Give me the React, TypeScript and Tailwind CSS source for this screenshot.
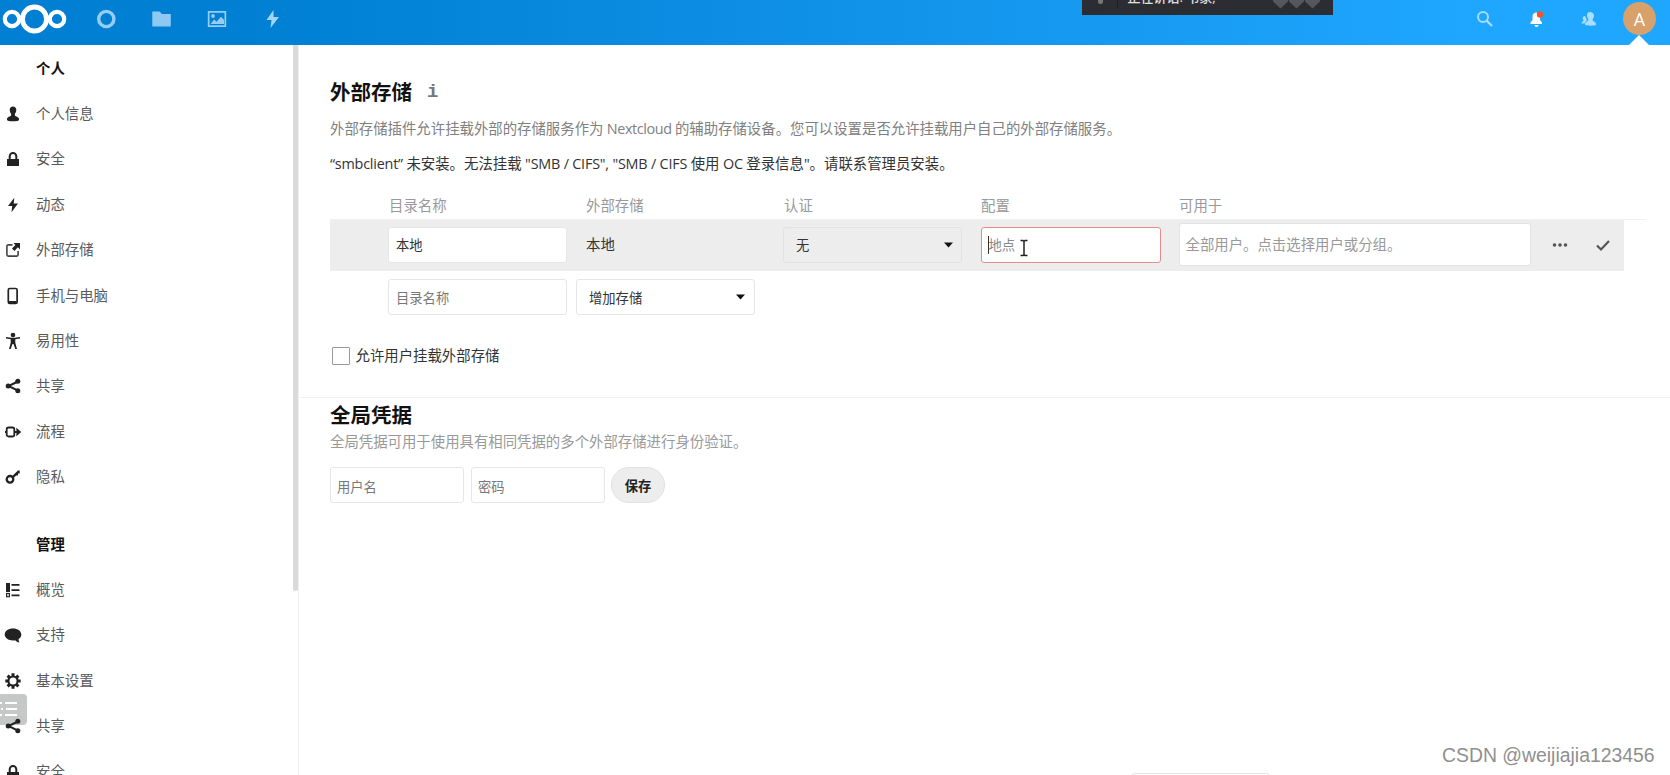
import React from "react";

type IconName =
  | "user" | "lock" | "bolt" | "external" | "phone" | "access" | "share"
  | "flow" | "key" | "list" | "comment" | "gear";

function Icon({ name }: { name: IconName }) {
  const common = { width: 16, height: 16, viewBox: "0 0 16 16", fill: "#222", className: "block shrink-0" };
  switch (name) {
    case "user":
      return <svg {...common}><path d="M8 .5C6 .5 4.700 1.800 4.700 3.800c0 1.700.6 3 1.400 4v1.600C5.600 10.400 2 10.700 2 13v.7c0 1 2.500 1.500 6 1.500s6-.5 6-1.500V13c0-2.300-3.600-2.600-4.100-3.600V7.800c.8-1 1.400-2.300 1.400-4C11.300 1.800 10 .5 8 .5z" /></svg>;
    case "lock":
      return <svg {...common}><path d="M8 1a4.300 4.300 0 0 0-4.300 4.300V8H2v7h12V8h-1.700V5.300A4.300 4.300 0 0 0 8 1zm0 2a2.300 2.300 0 0 1 2.300 2.300V8H5.700V5.300A2.300 2.300 0 0 1 8 3z" /></svg>;
    case "bolt":
      return <svg {...common}><path d="M9.300.8 3 9h4.200L6.500 15.200 13 6.600H8.700z" /></svg>;
    case "external":
      return <svg {...common}><path d="M7.500 2.900H3.200a1.300 1.300 0 0 0-1.300 1.300v8.600a1.300 1.300 0 0 0 1.300 1.300h8.600a1.300 1.300 0 0 0 1.300-1.300V9" fill="none" stroke="#444" strokeWidth="1.600" /><path d="M8.500 1H15v6.500l-2.200-2.200L9.500 9 7 6.500l3.400-3.500z" /></svg>;
    case "phone":
      return <svg {...common} height={18} viewBox="0 0 16 18"><rect x="3.300" y="1.500" width="8.800" height="15" rx="1.500" fill="none" stroke="#222" strokeWidth="1.700" /><path d="M4 14h7.500v2H4z" /></svg>;
    case "access":
      return <svg {...common} height={18} viewBox="0 0 16 18"><circle cx="8" cy="3" r="2.300" /><path d="M1 4.900 6.500 5.700h3L15 4.900v1.500L10.300 7.300v3.400L12 17h-1.700L8.500 12h-1L5.700 17H4l1.700-6.300V7.300L1 6.400z" /></svg>;
    case "share":
      return <svg {...common}><path d="M13 3.500 3.500 8 13 12.700" fill="none" stroke="#222" strokeWidth="2" /><circle cx="12.800" cy="3.300" r="2.500" /><circle cx="3.200" cy="8" r="2.500" /><circle cx="12.800" cy="12.700" r="2.500" /></svg>;
    case "flow":
      return <svg {...common}><rect x="1.700" y="3.500" width="7.600" height="9" rx="1.800" fill="none" stroke="#222" strokeWidth="1.800" /><path d="M0 7h1.500v2H0zM9.500 7h4v2h-4z" /><path d="M11.300 3.700 16.200 8l-4.900 4.300V9.600L13 8l-1.700-1.600z" /></svg>;
    case "key":
      return <svg {...common}><circle cx="5" cy="10.300" r="3.300" fill="none" stroke="#222" strokeWidth="2.300" /><path d="m7 7.200 6-5.700h1.700v3h-1.700v1.900h-1.900L8.700 9z" /></svg>;
    case "list":
      return <svg {...common}><path d="M1 1h4v9H1zM6.500 2h8v1.800h-8zM6.500 7.200h8V9h-8zM6.500 12.500h8v1.800h-8z" /><rect x="1.600" y="11.500" width="2.800" height="3.200" fill="none" stroke="#222" strokeWidth="1.200" /></svg>;
    case "comment":
      return <svg {...common} width={18} viewBox="0 0 18 16"><path d="M9 1.500c4.800 0 8.300 2.600 8.300 6 0 2-1 3.500-2.800 4.600.1 1.500.5 2.600.9 3.400-1.800-.4-3.200-1.200-4.300-2.300-.7.100-1.400.2-2.100.2C4.200 13.400.7 10.900.7 7.500s3.500-6 8.300-6z" /></svg>;
    case "gear":
      return <svg {...common}><g stroke="#222" strokeWidth="3" strokeLinecap="butt"><path d="M8 0.300v15.400M.3 8h15.400M2.600 2.600l10.800 10.800M13.400 2.600 2.600 13.400" /></g><circle cx="8" cy="8" r="5.600" /><circle cx="8" cy="8" r="3.500" fill="#fff" /></svg>;
  }
}

function NavItem({ icon, label }: { icon: IconName; label: string }) {
  return (
    <li className="flex h-[45.400px] items-center">
      <span className="relative z-20 flex w-[26px] shrink-0 justify-center">
        <Icon name={icon} />
      </span>
      <span className="ml-[10px] text-[#5a5a5a]">{label}</span>
    </li>
  );
}

const personal: [IconName, string][] = [
  ["user", "个人信息"], ["lock", "安全"], ["bolt", "动态"], ["external", "外部存储"],
  ["phone", "手机与电脑"], ["access", "易用性"], ["share", "共享"], ["flow", "流程"], ["key", "隐私"],
];
const admin: [IconName, string][] = [
  ["list", "概览"], ["comment", "支持"], ["gear", "基本设置"], ["share", "共享"], ["lock", "安全"],
];

function Caret() {
  return <svg width="9" height="6" viewBox="0 0 9 6" className="block"><path d="M0 .5h9L4.500 5.500z" fill="#111" /></svg>;
}

const field = "flex h-[36px] items-center rounded-[3px] border border-[#e6e6e6] bg-white text-[13.300px]";

export default function App() {
  return (
    <div className="relative flex h-[775px] w-[1670px] flex-col overflow-hidden bg-white font-['Open_Sans','Noto_Sans_CJK_SC',sans-serif] text-[14.400px] leading-[22px] text-[#333]">
      <header className="flex h-[45px] shrink-0 items-start justify-between bg-linear-to-r from-[#007fd3] from-15% to-[#1fa7ff] to-90%">
        <div className="flex h-[38px] items-center">
          <svg width="66" height="32" viewBox="0 0 66 32" fill="none" stroke="#fff" className="ml-[1px] block">
            <circle cx="33.500" cy="16" r="12" strokeWidth="4.800" />
            <circle cx="11" cy="16" r="7.200" strokeWidth="4.200" />
            <circle cx="56" cy="16" r="7.200" strokeWidth="4.200" />
          </svg>
          <svg width="20" height="20" viewBox="0 0 20 20" className="ml-[29px] block"><circle cx="10.300" cy="10" r="7.600" fill="none" stroke="#96cdf2" strokeWidth="3.400" /></svg>
          <svg width="20" height="20" viewBox="0 0 20 20" className="ml-[36px] block" fill="#8fc9f2"><path d="M.3 2.500h7.500l2 2.500h9v12.500H.3z" /></svg>
          <svg width="20" height="20" viewBox="0 0 20 20" className="ml-[35px] block" fill="#96cdf2"><path fillRule="evenodd" d="M.8 2h18.400v16H.8zm1.700 1.700v12.600h15V3.700z" /><circle cx="6" cy="7" r="1.900" /><path d="m3.500 15 3.700-4.500 2.300 2.300 4.500-5 3 3V15z" /></svg>
          <svg width="20" height="20" viewBox="0 0 20 20" className="ml-[36px] block" fill="#a3d5f5"><path d="M10.500 1 3.500 11h5L7.500 19 16 8h-5.500z" /></svg>
        </div>
        <div className="flex">
          <div className="mr-[142px] flex h-[14.600px] w-[251px] items-end justify-between overflow-hidden bg-[#2b2d33] text-[13px] leading-[16px] font-medium text-[#e0e0e0]">
            <span className="ml-[16px] h-[4px] w-[5px] self-start rounded-b bg-[#777]" />
            <span className="ml-[14px] h-[8px] w-px self-start bg-[#1d1f24]" />
            <span className="mr-auto ml-[10px] -translate-y-[10px]">正在讲话: 韦家,</span>
            <svg width="50" height="15" viewBox="0 0 50 15" className="mr-[11px] block"><path d="M1 0h15v1.500L8.500 8.500 1 1.500zM17 0h15v1.500l-7.500 7-7.500-7zM33 0h15v1.500l-7.500 7-7.500-7z" fill="#55575c" /></svg>
          </div>
          <div className="flex h-[37px] items-center">
            <svg width="20" height="20" viewBox="0 0 20 20" className="block" fill="none" stroke="#a5dcff"><circle cx="8" cy="8" r="5" strokeWidth="2" /><path d="m11.500 11.500 5.500 5.500" strokeWidth="2.400" /></svg>
            <svg width="20" height="20" viewBox="0 0 20 20" className="ml-[32px] block"><path d="M9 3.500c-2.500.5-3.500 2-3.500 4.500v3l-2 2.500V15h11.500v-1.500l-2-2.500V8c0-2.500-1-4-4-4.500zM7.500 16a2 2 0 0 0 4 0z" fill="#fff" /><circle cx="13" cy="5.500" r="3.200" fill="#f0562a" /></svg>
            <svg width="20" height="20" viewBox="0 0 20 20" className="ml-[32px] block" fill="#a9deff"><path d="M11 3c-2 0-3 1.500-3 3.300C8 8 8.500 9 9.300 10v1.500C8.500 12.500 6 13 6 15v.8c2 1.200 9 1.200 11 0V15c0-2-2.500-2.500-3.300-3.500V10c.8-1 1.300-2 1.300-3.700C15 4.500 13 3 11 3z" /><path d="M6 7c-1.500 0-2.300 1-2.300 2.300 0 1 .4 1.700 1 2.300-.3 1-2.200 1-2.200 3h3c.5-2 2-2.500 2.500-3.200z" /></svg>
            <div className="mr-[14px] ml-[24.500px] flex h-[33px] w-[33px] items-center justify-center rounded-full bg-[#d8a06b] text-[18px] text-white">A</div>
          </div>
        </div>
      </header>
      <svg width="22" height="11" viewBox="0 0 22 11" className="absolute top-[35px] left-[1628px]"><path d="M0 11 11 0l11 11z" fill="#fff" /></svg>

      <div className="flex min-h-0 grow">
        <nav className="flex w-[299px] shrink-0 justify-between overflow-hidden border-r border-[#f0f0f0]">
          <div className="flex flex-col">
            <h3 className="mt-[1px] ml-[36px] flex h-[45.400px] shrink-0 items-center font-bold text-[#111]">个人</h3>
            <ul className="shrink-0">{personal.map(([i, l]) => <NavItem key={l} icon={i} label={l} />)}</ul>
            <h3 className="mt-[22px] ml-[36px] flex h-[45.400px] shrink-0 items-center font-bold text-[#111]">管理</h3>
            <ul className="shrink-0">{admin.map(([i, l]) => <NavItem key={l} icon={i} label={l} />)}</ul>
          </div>
          <div className="h-[546px] w-[5px] shrink-0 rounded-b bg-[#dadada]" />
        </nav>

        <main className="flex grow flex-col">
          <section className="flex h-[353px] flex-col border-b border-[#f1f1f1] pl-[31px]">
            <h2 className="mt-[33px] flex h-[28px] items-center text-[20.500px] font-bold text-[#111]">
              外部存储
              <span className="ml-[15px] font-['Liberation_Mono'] text-[19px] text-[#777]">i</span>
            </h2>
            <p className="mt-[12px] whitespace-nowrap text-[#808080]">外部存储插件允许挂载外部的存储服务作为<span className="tracking-[-0.400px]"> Nextcloud </span>的辅助存储设备。您可以设置是否允许挂载用户自己的外部存储服务。</p>
            <p className="mt-[13px] whitespace-nowrap text-[#333]"><span className="tracking-[-0.210px]">“smbclient” </span>未安装。无法挂载<span className="tracking-[-0.210px]"> "SMB / CIFS", "SMB / CIFS </span>使用<span className="tracking-[-0.210px]"> OC </span>登录信息"。请联系管理员安装。</p>
            <div className="mt-[14px] mr-[24px] grid h-[31px] grid-cols-[59px_197px_198px_197px_198px_1fr] items-center border-b border-[#f0f0f0] pt-[3px] text-[#999]">
              <span /><span>目录名称</span><span>外部存储</span><span>认证</span><span>配置</span><span>可用于</span>
            </div>
            <div className="flex h-[51px] w-[1294px] items-center bg-[#ededed] pb-[2px]">
              <div className={field + " ml-[58px] w-[179px] pl-[7px]"}>本地</div>
              <span className="ml-[19px] w-[197px]">本地</span>
              <div className="flex h-[36px] w-[179px] items-center justify-between rounded-[3px] border border-[#e2e2e2] pr-[8px] pl-[12px] text-[13.300px]">无<Caret /></div>
              <div className="ml-[18.500px] flex h-[36px] w-[180px] items-center rounded-[3px] border-[1.500px] border-[#e58c88] bg-white pl-[6px] text-[13.300px] text-[#888]">
                <span className="h-[18px] w-px bg-[#333]" />地点
                <svg width="8" height="18" viewBox="0 0 8 18" className="mt-[7px] ml-[5px] block"><path d="M.5 1.500H3l1 1 1-1h2.500M4 2v14M.5 16.500H3l1-1 1 1h2.500" fill="none" stroke="#222" strokeWidth="1.500" /></svg>
              </div>
              <div className="ml-[18px] flex h-[43px] w-[352px] items-center rounded-[3px] border border-[#e3e3e3] bg-white pl-[6px] text-[#999]">全部用户。点击选择用户或分组。</div>
              <svg width="16" height="16" viewBox="0 0 16 16" className="ml-[21px] block" fill="#555"><circle cx="2.500" cy="8" r="1.800" /><circle cx="8" cy="8" r="1.800" /><circle cx="13.500" cy="8" r="1.800" /></svg>
              <svg width="16" height="16" viewBox="0 0 16 16" className="ml-[27px] block"><path d="m2 8.500 4 4 8-8.500" fill="none" stroke="#555" strokeWidth="2.200" /></svg>
            </div>
            <div className="mt-[8px] flex">
              <div className={field + " ml-[58px] w-[179px] pt-[2px] pl-[7px] text-[#777]"}>目录名称</div>
              <div className={field + " ml-[9px] w-[179px] justify-between pr-[9px] pl-[12px]"}><span className="pt-[2px]">增加存储</span><Caret /></div>
            </div>
            <label className="mt-[30px] ml-[2px] flex items-center">
              <span className="h-[18px] w-[18px] rounded-[1px] border border-[#999]" />
              <span className="ml-[5.500px]">允许用户挂载外部存储</span>
            </label>
          </section>
          <section className="flex flex-col pl-[31px]">
            <h2 className="mt-[3px] flex h-[28px] items-center text-[20.500px] font-bold text-[#111]">全局凭据</h2>
            <p className="mt-[2px] text-[#999]">全局凭据可用于使用具有相同凭据的多个外部存储进行身份验证。</p>
            <div className="mt-[14px] flex">
              <div className={field + " w-[134px] pt-[3px] pl-[6px] text-[#777]"}>用户名</div>
              <div className={field + " ml-[7px] w-[134px] pt-[3px] pl-[6px] text-[#777]"}>密码</div>
              <button className="ml-[6px] h-[36px] w-[54px] rounded-full border border-[#e0e0e0] bg-[#ededed] pt-[2px] text-[13.300px] font-bold text-[#222]">保存</button>
            </div>
          </section>
        </main>
      </div>

      <div className="absolute top-[694px] left-0 z-10 h-[31px] w-[27px] rounded-r-[4px] bg-[#c6c8c7]">
        <svg width="27" height="31" viewBox="0 0 27 31" className="block" stroke="#fff" strokeWidth="2"><path d="M0 9h2M5 9h12M1 15h2M6 15h11M0 21h2M5 21h12" /></svg>
      </div>
      <div className="absolute top-[773px] left-[1131px] h-[4px] w-[139px] rounded-t border border-[#e6e2e2]" />
      <div className="absolute top-[744px] left-[1442px] font-['Liberation_Sans'] text-[19.400px] whitespace-nowrap text-[#8f8f8f]">CSDN @weijiajia123456</div>
    </div>
  );
}
